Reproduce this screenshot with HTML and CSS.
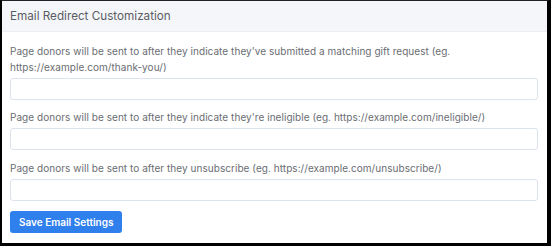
FILE: index.html
```html
<!DOCTYPE html>
<html>
<head>
<meta charset="utf-8">
<link rel="stylesheet" href="styles.css">
</head>
<body>
<div class="frame">
  <div class="card">
    <div class="card-header">Email Redirect Customization</div>
    <div class="card-body">
      <div class="field">
        <label class="field-label">Page donors will be sent to after they indicate they've submitted a matching gift request (eg. https://example.com/thank-you/)</label>
        <input class="field-input" type="text">
      </div>
      <div class="field">
        <label class="field-label">Page donors will be sent to after they indicate they're ineligible (eg. https://example.com/ineligible/)</label>
        <input class="field-input" type="text">
      </div>
      <div class="field">
        <label class="field-label">Page donors will be sent to after they unsubscribe (eg. https://example.com/unsubscribe/)</label>
        <input class="field-input" type="text">
      </div>
      <button class="save-btn" type="button">Save Email Settings</button>
    </div>
  </div>
</div>
</body>
</html>
```
FILE: styles.css
```css
* { box-sizing: border-box; }
html, body { margin: 0; padding: 0; background: #000; }
body { width: 551px; height: 246px; overflow: hidden; font-family: Inter, "Noto Sans", sans-serif; }
.frame {
  width: 551px;
  height: 246px;
  border-top: 1px solid #222;
  border-left: 2px solid #000;
  border-right: 4px solid #000;
  border-bottom: 3px solid #000;
  background: #fff;
}
.card { height: 100%; background: #fff; }
.card-header {
  height: 31px;
  background: #f5f6fa;
  border-bottom: 1px solid #eceef3;
  padding: 0 8px;
  display: flex;
  align-items: center;
  font-size: 11.7px;
  color: #5a5d63;
}
.card-body { padding: 11px 8px 0 8px; display: flex; flex-direction: column; }
.field { display: flex; flex-direction: column; gap: 3px; margin-bottom: 9px; }
.field:nth-child(2) { margin-bottom: 10px; }
.field-label { font-size: 10px; line-height: 16px; color: #6a6d72; }
.field-label { letter-spacing: 0.05px; }
.field-input {
  height: 22px;
  width: 528px;
  border: 1px solid #dde3ee;
  border-radius: 3px;
  background: #fff;
  outline: none;
}
.save-btn {
  align-self: flex-start;
  margin-top: 1px;
  height: 22px;
  padding: 0 9px;
  background: #2f80ed;
  color: #fff;
  border: none;
  border-radius: 3px;
  font-family: Inter, "Noto Sans", sans-serif;
  font-size: 10px;
  font-weight: 600;
}
```
